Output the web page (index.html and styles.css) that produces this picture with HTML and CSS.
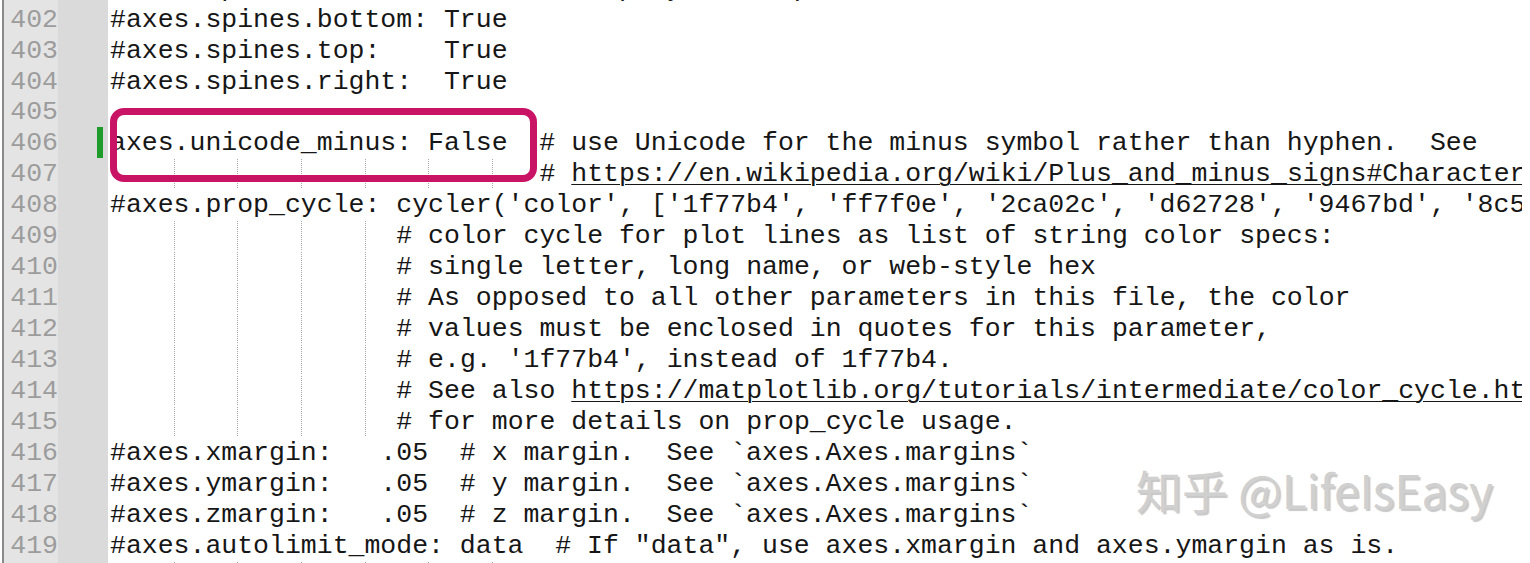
FILE: index.html
```html
<!DOCTYPE html>
<html lang="en">
<head>
    <meta charset="UTF-8">
    <title>matplotlibrc</title>

    <link rel="stylesheet" href="styles.css">
</head>
<body>

<div class="editor">
    <div class="editor__lines">
        <div class="row"><div class="row__num">401</div><div class="row__mark"></div><div class="row__code">#axes.spines.left:   True  # display axis spines</div></div>
        <div class="row"><div class="row__num">402</div><div class="row__mark"></div><div class="row__code">#axes.spines.bottom: True</div></div>
        <div class="row"><div class="row__num">403</div><div class="row__mark"></div><div class="row__code">#axes.spines.top:    True</div></div>
        <div class="row"><div class="row__num">404</div><div class="row__mark"></div><div class="row__code">#axes.spines.right:  True</div></div>
        <div class="row"><div class="row__num">405</div><div class="row__mark"></div><div class="row__code"></div></div>
        <div class="row"><div class="row__num">406</div><div class="row__mark"><span class="row__changed"></span></div><div class="row__code">axes.unicode_minus: False  # use Unicode for the minus symbol rather than hyphen.  See</div></div>
        <div class="row"><div class="row__num">407</div><div class="row__mark"></div><div class="row__code">    <span class="guide">    </span><span class="guide">    </span><span class="guide">    </span><span class="guide">    </span><span class="guide">    </span><span class="guide">   </span># <span class="link">https://en.wikipedia.org/wiki/Plus_and_minus_signs#Character_codes</span></div></div>
        <div class="row"><div class="row__num">408</div><div class="row__mark"></div><div class="row__code">#axes.prop_cycle: cycler('color', ['1f77b4', 'ff7f0e', '2ca02c', 'd62728', '9467bd', '8c564b', 'e377c2', '7f7f7f', 'bcbd22', '17becf'])</div></div>
        <div class="row"><div class="row__num">409</div><div class="row__mark"></div><div class="row__code">    <span class="guide">    </span><span class="guide">    </span><span class="guide">    </span><span class="guide">  </span># color cycle for plot lines as list of string color specs:</div></div>
        <div class="row"><div class="row__num">410</div><div class="row__mark"></div><div class="row__code">    <span class="guide">    </span><span class="guide">    </span><span class="guide">    </span><span class="guide">  </span># single letter, long name, or web-style hex</div></div>
        <div class="row"><div class="row__num">411</div><div class="row__mark"></div><div class="row__code">    <span class="guide">    </span><span class="guide">    </span><span class="guide">    </span><span class="guide">  </span># As opposed to all other parameters in this file, the color</div></div>
        <div class="row"><div class="row__num">412</div><div class="row__mark"></div><div class="row__code">    <span class="guide">    </span><span class="guide">    </span><span class="guide">    </span><span class="guide">  </span># values must be enclosed in quotes for this parameter,</div></div>
        <div class="row"><div class="row__num">413</div><div class="row__mark"></div><div class="row__code">    <span class="guide">    </span><span class="guide">    </span><span class="guide">    </span><span class="guide">  </span># e.g. '1f77b4', instead of 1f77b4.</div></div>
        <div class="row"><div class="row__num">414</div><div class="row__mark"></div><div class="row__code">    <span class="guide">    </span><span class="guide">    </span><span class="guide">    </span><span class="guide">  </span># See also <span class="link">https://matplotlib.org/tutorials/intermediate/color_cycle.html</span></div></div>
        <div class="row"><div class="row__num">415</div><div class="row__mark"></div><div class="row__code">    <span class="guide">    </span><span class="guide">    </span><span class="guide">    </span><span class="guide">  </span># for more details on prop_cycle usage.</div></div>
        <div class="row"><div class="row__num">416</div><div class="row__mark"></div><div class="row__code">#axes.xmargin:   .05  # x margin.  See `axes.Axes.margins`</div></div>
        <div class="row"><div class="row__num">417</div><div class="row__mark"></div><div class="row__code">#axes.ymargin:   .05  # y margin.  See `axes.Axes.margins`</div></div>
        <div class="row"><div class="row__num">418</div><div class="row__mark"></div><div class="row__code">#axes.zmargin:   .05  # z margin.  See `axes.Axes.margins`</div></div>
        <div class="row"><div class="row__num">419</div><div class="row__mark"></div><div class="row__code">#axes.autolimit_mode: data  # If "data", use axes.xmargin and axes.ymargin as is.</div></div>
        <div class="row"><div class="row__num">420</div><div class="row__mark"></div><div class="row__code">    <span class="guide">    </span><span class="guide">    </span><span class="guide">    </span><span class="guide">    </span><span class="guide">    </span><span class="guide">    </span># If "round_numbers", after application of margins, axis</div></div>
    </div>
</div>

<div class="highlight"></div>
<div class="watermark">知乎 @LifeIsEasy</div>

</body>
</html>
```

FILE: styles.css
```css
* {
    box-sizing: border-box;
    margin: 0;
    padding: 0;
}

body {
    background: #ffffff;
    overflow: hidden;
    height: 563px;
    position: relative;
}

.editor {
    margin-left: 2px;
    width: 1520px;
    border-left: 2px solid #8a8a8a;
    height: 100%;
    overflow: hidden;
}

.editor__lines {
    margin-top: -26.3px;
    font-family: "Liberation Mono", "Courier New", monospace;
    font-size: 26.5px;
    line-height: 30.94px;
}

.row {
    display: flex;
    height: 30.94px;
}

.row__num {
    flex: 0 0 54px;
    background: #e4e4e4;
    color: #9c9c9c;
    text-align: right;
}

.row__mark {
    flex: 0 0 50px;
    background: #dadada;
    position: relative;
}

.row__changed {
    position: absolute;
    left: 39px;
    top: -1px;
    width: 6px;
    height: 31px;
    background: #1f9b2b;
}

.row__code {
    flex: 1 0 auto;
    padding-left: 2px;
    color: #161616;
    white-space: pre;
}

.guide {
    background-image: repeating-linear-gradient(to bottom, #a8a8a8 0 1px, transparent 1px 2px);
    background-size: 1px 100%;
    background-repeat: no-repeat;
}

.link {
    text-decoration: underline;
    text-decoration-thickness: 1px;
    text-underline-offset: 3px;
}

.highlight {
    position: absolute;
    left: 110px;
    top: 108px;
    width: 427px;
    height: 74px;
    border: 7px solid #c91465;
    border-radius: 14px;
}

.watermark {
    position: absolute;
    left: 1136px;
    top: 466px;
    font-family: "Noto Sans CJK SC", "Noto Sans", sans-serif;
    font-size: 46px;
    line-height: 1;
    color: #d0d0d0;
    text-shadow: 2px 2px 1px rgba(0, 0, 0, 0.22);
    white-space: nowrap;
}
```
